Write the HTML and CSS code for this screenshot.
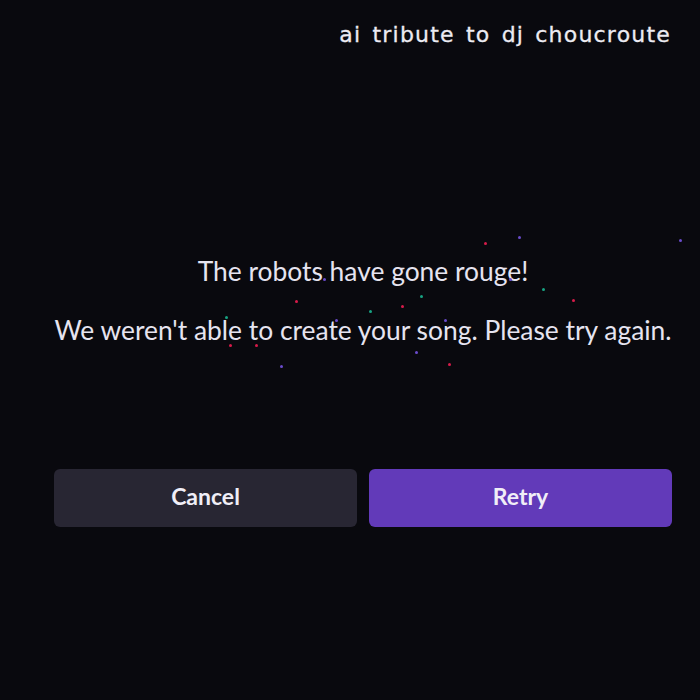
FILE: index.html
```html
<!doctype html>
<html lang="en">

<head>
  <meta charset="UTF-8" />
  <title>ai tribute to dj choucroute</title>
  <link rel="stylesheet" href="styles.css">
</head>

<body>
  <header class="top">
    <span class="brand">ai tribute to dj choucroute</span>
  </header>

  <main class="error-box">
    <div class="sparks">
      <span class="dot red" style="left:484px;top:242px"></span>
      <span class="dot purple" style="left:518px;top:236px"></span>
      <span class="dot purple" style="left:679px;top:239px"></span>
      <span class="dot purple" style="left:323px;top:278px"></span>
      <span class="dot purple" style="left:509px;top:278px"></span>
      <span class="dot teal" style="left:542px;top:288px"></span>
      <span class="dot red" style="left:572px;top:299px"></span>
      <span class="dot red" style="left:295px;top:300px"></span>
      <span class="dot teal" style="left:420px;top:295px"></span>
      <span class="dot red" style="left:401px;top:305px"></span>
      <span class="dot teal" style="left:369px;top:310px"></span>
      <span class="dot teal" style="left:225px;top:316px"></span>
      <span class="dot purple" style="left:335px;top:319px"></span>
      <span class="dot purple" style="left:444px;top:319px"></span>
      <span class="dot red" style="left:229px;top:344px"></span>
      <span class="dot red" style="left:255px;top:344px"></span>
      <span class="dot purple" style="left:415px;top:351px"></span>
      <span class="dot red" style="left:448px;top:363px"></span>
      <span class="dot purple" style="left:280px;top:365px"></span>
    </div>

    <div class="message">
      <p>The robots have gone rouge!</p>
      <p>We weren't able to create your song. Please try again.</p>
    </div>

    <div class="actions">
      <button class="btn cancel" type="button">Cancel</button>
      <button class="btn retry" type="button">Retry</button>
    </div>
  </main>
</body>

</html>
```

FILE: styles.css
```css
body {
  font-family: Lato, "Noto Sans", sans-serif;
  background: #09090e;
  color: #e6e4f0;
  margin: 0;
  min-height: 100vh;
}

.top {
  display: flex;
  justify-content: flex-end;
  padding: 22px 29px 0 0;
}

.brand {
  font-family: "DejaVu Sans", sans-serif;
  font-size: 22px;
  letter-spacing: 1.2px;
  word-spacing: 3px;
  color: #ecebf2;
  -webkit-text-stroke: 0.3px #ecebf2;
}

.error-box {
  padding: 0 28px 0 54px;
}

.sparks .dot {
  position: absolute;
  z-index: 1;
  width: 3px;
  height: 3px;
  border-radius: 50%;
}

.red {
  background: #d81b4a;
}

.purple {
  background: #6a4ccc;
}

.teal {
  background: #18a383;
}

.message {
  margin-top: 211px;
  display: flex;
  flex-direction: column;
  align-items: center;
  gap: 33px;
}

.message p {
  margin: 0;
  font-size: 26.4px;
  line-height: 26px;
}

.actions {
  display: flex;
  gap: 12px;
  margin-top: 126px;
}

.btn {
  flex: 1;
  height: 58px;
  padding: 0 0 5px;
  border: none;
  border-radius: 6px;
  font-family: Lato, "Noto Sans", sans-serif;
  font-size: 23px;
  font-weight: bold;
  color: #f0eef7;
  cursor: pointer;
}

.cancel {
  background: #282633;
}

.retry {
  background: #623ab9;
}
```
